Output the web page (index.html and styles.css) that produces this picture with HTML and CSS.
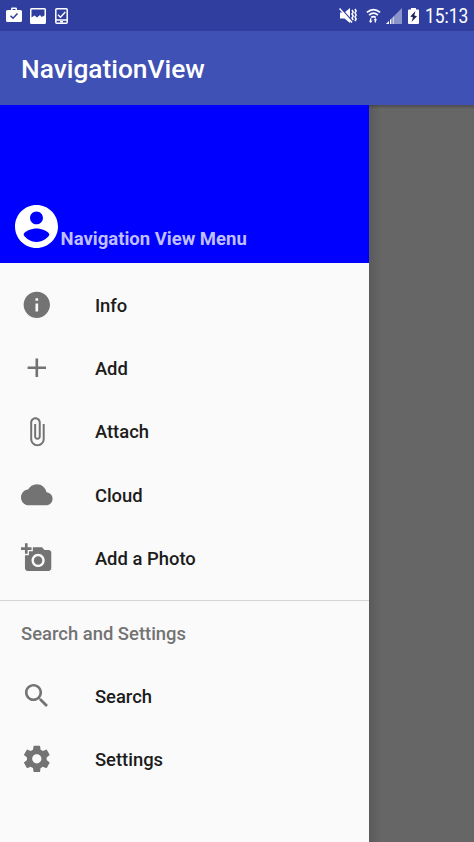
FILE: index.html
```html
<!DOCTYPE html>
<html lang="en">
<head>
<meta charset="utf-8">
<title>NavigationView</title>
<link rel="stylesheet" href="styles.css">
</head>
<body>
<div class="screen">
  <header class="status">
    <div class="notifications">
      <svg class="bag" viewBox="0 0 17 17"><path fill="#fff" fill-rule="evenodd" d="M5 3V1.800Q5 .5 6.300.5h3.400Q11 .5 11 1.800V3h3.500q1.500 0 1.500 1.500v9q0 1.500-1.500 1.500h-13Q0 15 0 13.500v-9Q0 3 1.500 3zm1.500 0h3V2h-3z"/><path d="m4.500 8.700 2.500 2.500L11.500 6.500" fill="none" stroke="#303f9f" stroke-width="1.600"/></svg>
      <svg class="picture" viewBox="0 0 16 16"><path fill="#fff" fill-rule="evenodd" d="M1.500 0h13Q16 0 16 1.500v13q0 1.500-1.500 1.500h-13Q0 16 0 14.500v-13Q0 0 1.500 0zM1.500 1.500V9.500l3-2 2.500 2 3-2.500 1.700 2 2.800-1.500V1.500z"/></svg>
      <svg class="device" viewBox="0 0 13 16"><rect x=".8" y=".8" width="11.400" height="14.400" rx="1" fill="none" stroke="#fff" stroke-width="1.500"/><path d="m3 6.700 2.500 2.500L10.300 4M1 12h11M5 13.800h3" fill="none" stroke="#fff" stroke-width="1.400"/></svg>
    </div>
    <div class="system">
      <svg class="mute" viewBox="0 0 18 18"><path fill="#fff" d="M1 5.500h4.500L11 1v15l-5.500-4.500H1z"/><path d="m2 1.500 12 13.500" stroke="#303f9f" stroke-width="1.500"/><path d="m.5 1.500 12.500 14M13 3l1.200 2L13 7l1.200 2L13 11l1.200 2M16 2l1.200 2L16 6l1.200 2L16 10l1.200 2L16 14" fill="none" stroke="#fff" stroke-width="1.500"/></svg>
      <svg class="wifi" viewBox="0 0 16 18"><g fill="none" stroke="#fff" stroke-width="1.900"><path d="M1 5.200q7-6 14 0M3.300 8q4.700-4 9.400 0M5.600 10.600q2.400-2 4.800 0"/></g><path fill="#fff" d="M3 14h1.300v-2.500h1.400V14H7l-2 2.500zM8 13.500l2-2.500 2 2.500h-1.300V16H9.300v-2.500z"/></svg>
      <svg class="signal" viewBox="0 0 16 16"><path fill="#8b94cb" d="M16 0v16H0z"/><path fill="#fff" d="M7.500 8.500V16H0z"/><path stroke="#303f9f" d="M3.500 9v7M6 7v9"/></svg>
      <svg class="battery" viewBox="0 0 11 16"><path fill="#fff" d="M3 0h5v1.500h2q1 0 1 1V15q0 1-1 1H1q-1 0-1-1V2.500q0-1 1-1h2z"/><path fill="#1c2354" d="M7.500 3 2.300 8.500l2.700.7L3.500 14 9 8.300 6.300 7.500z"/></svg>
      <span class="clock">15:13</span>
    </div>
  </header>
  <div class="toolbar"><h1>NavigationView</h1></div>
  <main class="content">
    <nav class="drawer">
      <div class="profile">
        <svg viewBox="2 2 20 20"><path fill="#fff" d="M12 2C6.480 2 2 6.480 2 12s4.480 10 10 10 10-4.480 10-10S17.520 2 12 2zm0 3c1.660 0 3 1.340 3 3s-1.340 3-3 3-3-1.340-3-3 1.340-3 3-3zm0 14.200c-2.500 0-4.710-1.280-6-3.220.03-1.990 4-3.080 6-3.080 1.990 0 5.970 1.090 6 3.080-1.290 1.940-3.500 3.220-6 3.220z"/></svg>
        <span>Navigation View Menu</span>
      </div>
      <ul class="menu">
        <li><svg viewBox="0 0 24 24"><path d="M12 2C6.480 2 2 6.480 2 12s4.480 10 10 10 10-4.480 10-10S17.520 2 12 2zm1 15h-2v-6h2v6zm0-8h-2V7h2v2z"/></svg><span>Info</span></li>
        <li><svg viewBox="0 0 24 24"><path d="M19 13h-6v6h-2v-6H5v-2h6V5h2v6h6z"/></svg><span>Add</span></li>
        <li><svg viewBox="0 0 24 24"><path d="M16.500 6v11.500c0 2.210-1.790 4-4 4s-4-1.790-4-4V5c0-1.380 1.120-2.500 2.500-2.500s2.500 1.120 2.500 2.500v10.500c0 .55-.45 1-1 1s-1-.45-1-1V6H10v9.500c0 1.380 1.120 2.500 2.500 2.500s2.500-1.120 2.500-2.500V5c0-2.210-1.790-4-4-4S7 2.790 7 5v12.500c0 3.040 2.460 5.500 5.500 5.500s5.500-2.460 5.500-5.500V6h-1.500z"/></svg><span>Attach</span></li>
        <li><svg viewBox="0 0 24 24"><path d="M19.350 10.040C18.670 6.590 15.640 4 12 4 9.110 4 6.600 5.640 5.350 8.040 2.340 8.360 0 10.910 0 14c0 3.310 2.690 6 6 6h13c2.760 0 5-2.240 5-5 0-2.640-2.050-4.780-4.650-4.960z"/></svg><span>Cloud</span></li>
        <li><svg viewBox="0 0 24 24"><path d="M3 4V1h2v3h3v2H5v3H3V6H0V4h3zm3 6V7h3V4h7l1.830 2H21c1.100 0 2 .9 2 2v12c0 1.100-.9 2-2 2H5c-1.100 0-2-.9-2-2V10h3zm7 9c2.760 0 5-2.240 5-5s-2.240-5-5-5-5 2.240-5 5 2.240 5 5 5zm-3.200-5c0 1.770 1.430 3.200 3.200 3.200s3.200-1.430 3.200-3.200-1.430-3.200-3.200-3.200-3.200 1.430-3.200 3.200z"/></svg><span>Add a Photo</span></li>
      </ul>
      <h2>Search and Settings</h2>
      <ul class="menu secondary">
        <li><svg viewBox="0 0 24 24"><path d="M15.500 14h-.79l-.28-.27C15.410 12.590 16 11.110 16 9.500 16 5.910 13.090 3 9.500 3S3 5.910 3 9.500 5.910 16 9.500 16c1.610 0 3.090-.59 4.230-1.570l.27.28v.79l5 4.990L20.490 19l-4.990-5zm-6 0C7.010 14 5 11.990 5 9.500S7.010 5 9.500 5 14 7.010 14 9.500 11.990 14 9.500 14z"/></svg><span>Search</span></li>
        <li><svg viewBox="0 0 24 24"><path d="M19.430 12.980c.04-.32.07-.64.07-.98s-.03-.66-.07-.98l2.110-1.650c.19-.15.24-.42.12-.64l-2-3.460c-.12-.22-.39-.3-.61-.22l-2.490 1c-.52-.4-1.080-.73-1.690-.98l-.38-2.650C14.460 2.180 14.250 2 14 2h-4c-.25 0-.46.18-.49.42l-.38 2.650c-.61.25-1.170.59-1.690.98l-2.490-1c-.23-.09-.49 0-.61.22l-2 3.460c-.13.22-.07.49.12.64l2.110 1.650c-.04.32-.07.65-.07.98s.03.66.07.98l-2.110 1.650c-.19.15-.24.42-.12.64l2 3.460c.12.22.39.3.61.22l2.490-1c.52.4 1.080.73 1.690.98l.38 2.650c.03.24.24.42.49.42h4c.25 0 .46-.18.49-.42l.38-2.650c.61-.25 1.170-.59 1.690-.98l2.490 1c.23.09.49 0 .61-.22l2-3.460c.12-.22.07-.49-.12-.64l-2.110-1.650zM12 15.500c-1.930 0-3.500-1.570-3.500-3.500s1.570-3.500 3.500-3.500 3.500 1.570 3.500 3.500-1.570 3.500-3.500 3.500z"/></svg><span>Settings</span></li>
      </ul>
    </nav>
    <div class="scrim"></div>
  </main>
</div>
</body>
</html>
```
FILE: styles.css
```css
* { box-sizing: border-box; }
body { margin: 0; font-family: Roboto, "Liberation Sans", sans-serif; }
h1, h2, ul { margin: 0; padding: 0; }
ul { list-style: none; }
svg { display: block; flex: none; }
.screen { width: 474px; height: 842px; display: flex; flex-direction: column; overflow: hidden; }
.status { height: 31px; flex: none; display: flex; justify-content: space-between; background: #303f9f; color: #fff; padding: 0 6px 0 6px; }
.notifications, .system { display: flex; align-items: center; }
.notifications { gap: 7px; }
.bag { width: 17px; height: 17px; }
.picture { width: 16px; height: 16px; }
.device { width: 13px; height: 16px; margin-left: 2px; }
.mute { width: 18px; height: 18px; margin-right: 9px; }
.wifi { width: 15px; height: 18px; margin-right: 5px; }
.signal { width: 16px; height: 16px; margin-right: 6px; }
.battery { width: 11px; height: 16px; margin-right: 6px; }
.clock { font-size: 20.500px; line-height: 32px; width: 43px; white-space: nowrap; transform: scaleX(.85); transform-origin: left; }
.toolbar { height: 74px; flex: none; display: flex; align-items: center; padding-left: 21px; background: #3f51b5; color: #fff; }
.toolbar h1 { font-size: 26.300px; line-height: 32px; font-weight: 500; padding-top: 2px; }
.content { flex: 1; display: flex; min-height: 0; }
.drawer { width: 368.600px; flex: none; background: #fafafa; }
.scrim { flex: 1; background: linear-gradient(to bottom, rgba(0,0,0,.25), transparent 4px), linear-gradient(to right, #5a5a5a, #666 12px); }
.profile { height: 158px; background: #00f; display: flex; align-items: flex-end; padding: 0 0 15px 15px; }
.profile svg { width: 43px; height: 43px; }
.profile span { font-size: 18.500px; line-height: 22px; font-weight: 700; color: #bfbfff; margin-left: 2.600px; margin-bottom: -2px; }
.menu { padding: 10.500px 0; }
.menu li { height: 63.200px; display: flex; align-items: center; gap: 42.300px; padding-left: 21px; }
.menu svg { width: 31.600px; height: 31.600px; fill: #737373; }
.menu span { font-size: 18.430px; font-weight: 500; line-height: 24px; color: #1c1c1c; padding-top: 2px; }
h2 { height: 64.500px; border-top: 1.300px solid #d4d4d4; padding-left: 21px; font-size: 18.430px; line-height: 65px; font-weight: 500; color: #737373; }
.secondary { padding: 0; }
```
